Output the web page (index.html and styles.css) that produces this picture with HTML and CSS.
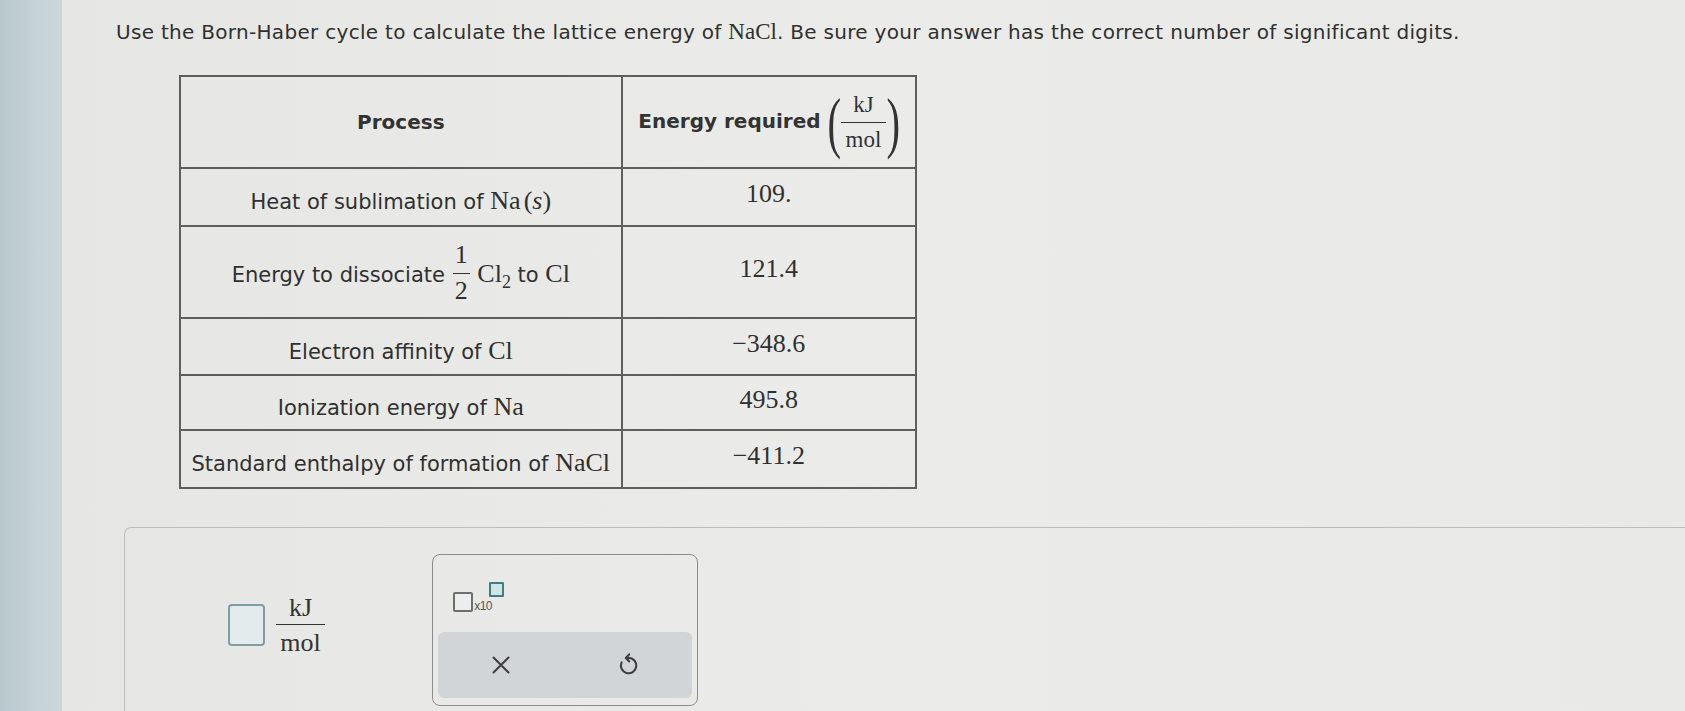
FILE: index.html
```html
<!DOCTYPE html>
<html>
<head>
<meta charset="utf-8">
<link rel="stylesheet" href="styles.css">
</head>
<body>
<div class="page">
  <div class="strip"></div>
  <main class="content">
    <p class="prompt">Use the Born-Haber cycle to calculate the lattice energy of <span class="m">NaCl</span>. Be sure your answer has the correct number of significant digits.</p>
    <table class="data">
      <tr class="r-head">
        <th class="c1">Process</th>
        <th class="c2">Energy required <span class="paren">(</span><span class="frac hfrac"><span class="num">kJ</span><span class="den">mol</span></span><span class="paren">)</span></th>
      </tr>
      <tr class="r1">
        <td class="c1 txt">Heat of sublimation of <span class="m">Na<span class="pr">(<i>s</i>)</span></span></td>
        <td class="c2 val">109.</td>
      </tr>
      <tr class="r2">
        <td class="c1 txt">Energy to dissociate <span class="frac half"><span class="num">1</span><span class="den">2</span></span> <span class="m">Cl<sub>2</sub></span> to <span class="m">Cl</span></td>
        <td class="c2 val">121.4</td>
      </tr>
      <tr class="r3">
        <td class="c1 txt">Electron affinity of <span class="m">Cl</span></td>
        <td class="c2 val">&minus;348.6</td>
      </tr>
      <tr class="r4">
        <td class="c1 txt">Ionization energy of <span class="m">Na</span></td>
        <td class="c2 val">495.8</td>
      </tr>
      <tr class="r5">
        <td class="c1 txt">Standard enthalpy of formation of <span class="m">NaCl</span></td>
        <td class="c2 val">&minus;411.2</td>
      </tr>
    </table>
    <section class="answer">
      <div class="entry">
        <span class="inbox"></span>
        <span class="frac unit"><span class="num">kJ</span><span class="den">mol</span></span>
      </div>
      <div class="widget">
        <div class="sci">
          <span class="sq"></span><span class="x10">x10</span><span class="sup"></span>
        </div>
        <div class="btns">
          <svg class="ico" width="20" height="20" viewBox="0 0 20 20"><path d="M2.5 2.5 L17.5 17.5 M17.5 2.5 L2.5 17.5" stroke="#3e3e3e" stroke-width="2" fill="none" stroke-linecap="round"/></svg>
          <svg class="ico" width="24" height="26" viewBox="0 0 20 22"><path d="M8.5 5 H10.5 A6.5 6.5 0 1 1 4.6 8.8" stroke="#3e3e3e" stroke-width="1.8" fill="none" stroke-linecap="round"/><path d="M11 2 L8.2 5 L11 8" stroke="#3e3e3e" stroke-width="1.8" fill="none" stroke-linecap="round" stroke-linejoin="round"/></svg>
        </div>
      </div>
    </section>
  </main>
</div>
</body>
</html>
```

FILE: styles.css
```css
html, body {
  margin: 0;
  padding: 0;
  height: 100%;
  overflow: hidden;
}
body {
  background: #e8e8e6;
  color: #303030;
  font-family: "DejaVu Sans", Verdana, sans-serif;
}
.page {
  display: flex;
  height: 711px;
}
.strip {
  width: 62px;
  flex: none;
  background: linear-gradient(90deg, #b8c8ce 0%, #c6d3d7 60%, #cbd6d9 100%);
}
.content {
  flex: 1;
  display: flex;
  flex-direction: column;
  align-items: flex-start;
  padding-left: 54px;
  background: linear-gradient(90deg, #e6e6e4 0%, #ebebe9 50%, #e9e9e7 100%);
}
.prompt {
  margin: 20px 0 0 0;
  font-size: 20px;
  line-height: 24px;
  letter-spacing: 0.3px;
}
.m {
  font-family: "Liberation Serif", "Times New Roman", serif;
  font-size: 23px;
  letter-spacing: 0;
}
.m i { font-style: italic; }
.pr { margin-left: 3px; }
.data {
  margin: 31px 0 0 63px;
  border-collapse: collapse;
  width: 738px;
  font-size: 21px;
}
.data th, .data td {
  border: 2px solid #5e5e5e;
  text-align: center;
  vertical-align: middle;
  padding: 0;
  white-space: nowrap;
}
.data .c1 { width: 442px; }
.data .c2 { width: 296px; }
.data th { font-weight: 700; font-size: 20px; color: #333; }
.r-head { height: 92px; }
.r1 { height: 58px; }
.r2 { height: 92px; }
.r3 { height: 57px; }
.r4 { height: 55px; }
.r5 { height: 58px; }
.txt { padding-top: 8px !important; }
.txt .m { font-size: 26px; }
.val {
  font-family: "Liberation Serif", "Times New Roman", serif;
  font-size: 26px;
  padding-bottom: 6px !important;
}
.paren {
  display: inline-block;
  vertical-align: middle;
  font-family: "Liberation Serif", serif;
  font-weight: 400;
  font-size: 68px;
  line-height: 68px;
  transform: scaleX(0.6);
  margin: 0 -5px;
  color: #333;
}
.frac {
  display: inline-flex;
  flex-direction: column;
  align-items: center;
  vertical-align: middle;
  font-family: "Liberation Serif", serif;
  font-weight: 400;
}
.frac .num {
  border-bottom: 1.5px solid #333;
  padding: 0 5px 1px;
  line-height: 1.1;
}
.frac .den { line-height: 1.1; padding-top: 2px; }
.hfrac { font-size: 23px; margin: 0 1px; }
.hfrac .num { padding: 0 12px 4px; }
.hfrac .den { padding-top: 4px; }
.half { font-size: 26px; margin: 0 1px; position: relative; top: -3px; }
.half .num { padding: 0 2px 3px; }
.half .den { padding-top: 3px; }
sub { font-size: 18px; vertical-align: -6px; line-height: 0; }
.answer {
  flex: 1;
  align-self: stretch;
  margin: 38px 0 0 8px;
  border: 1.5px solid #bdbdbb;
  border-right: none;
  border-bottom: none;
  border-radius: 7px 0 0 0;
  display: flex;
  align-items: flex-start;
  min-height: 0;
}
.entry {
  margin: 66px 0 0 103px;
  display: flex;
  align-items: center;
  gap: 11px;
}
.inbox {
  width: 33px;
  height: 38px;
  border: 2px solid #7f9ea3;
  border-radius: 4px;
  background: #e3ebed;
}
.unit { font-size: 26px; color: #333; }
.unit .num { padding: 0 13px 3px; line-height: 1.05; }
.unit .den { line-height: 1.05; padding-top: 4px; }
.widget {
  margin: 26px 0 0 107px;
  width: 266px;
  height: 152px;
  border: 1.5px solid #8c8c8c;
  border-radius: 8px;
  box-sizing: border-box;
  display: flex;
  flex-direction: column;
  padding: 27px 5px 7px 5px;
}
.sci {
  display: flex;
  align-items: flex-end;
  margin-left: 15px;
  height: 30px;
}
.sq {
  width: 16px;
  height: 16px;
  border: 2px solid #6e6e6e;
  border-radius: 2px;
  background: #eceeee;
}
.x10 {
  font-family: "Liberation Sans", Arial, sans-serif;
  font-size: 12px;
  color: #555;
  letter-spacing: -0.5px;
  margin-left: 1px;
  line-height: 12px;
}
.sup {
  width: 11px;
  height: 11px;
  border: 2px solid #3f7f7f;
  border-radius: 1px;
  background: #cfe4e4;
  align-self: flex-start;
  margin-left: -3px;
}
.btns {
  margin-top: auto;
  height: 66px;
  background: #d2d5d7;
  border-radius: 6px;
  display: flex;
  align-items: center;
  justify-content: space-around;
}
.ico { display: block; }
```
